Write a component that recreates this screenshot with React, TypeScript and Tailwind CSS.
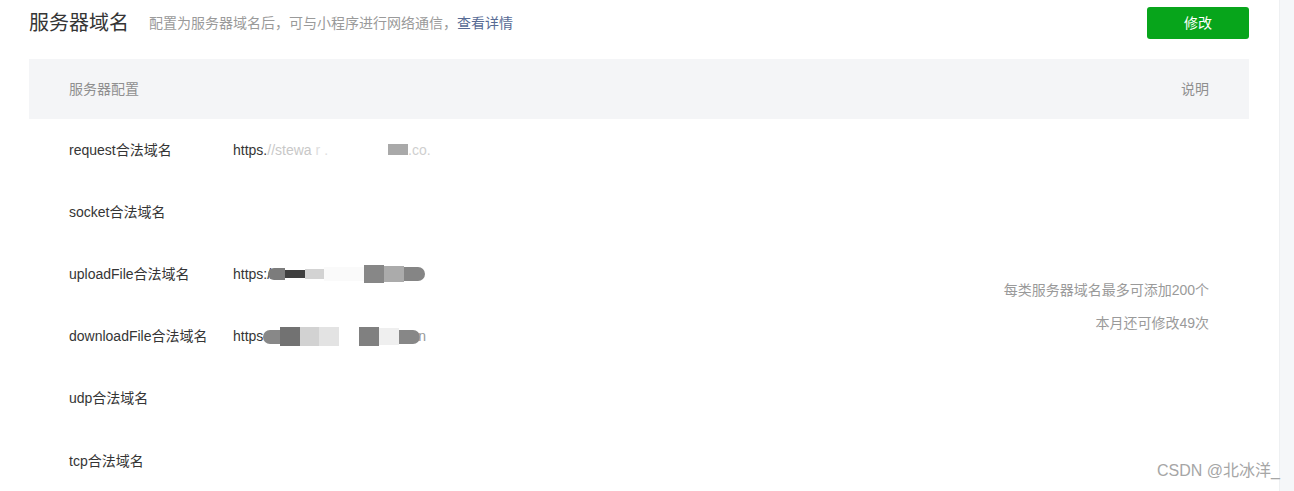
const rows = [
  { name: 'request合法域名', value: 'request' },
  { name: 'socket合法域名', value: '' },
  { name: 'uploadFile合法域名', value: 'upload' },
  { name: 'downloadFile合法域名', value: 'download' },
  { name: 'udp合法域名', value: '' },
  { name: 'tcp合法域名', value: '' },
];

function Masked({ kind }: { kind: string }) {
  if (kind === 'request') {
    return (
      <div className="flex items-center">
        <span>https.</span>
        <span className="text-[#c8c8c8]">//stewa</span>
        <span className="text-[#dedede] ml-[4px]">r .</span>
        <div className="w-[60px]" />
        <div className="w-[20px] h-[11px] bg-[#a9a9a9] -mt-[2px]" />
        <span className="text-[#cfcfcf]">.co.</span>
      </div>
    );
  }
  if (kind === 'upload') {
    return (
      <div className="flex items-center">
        <span>https:/</span>
        <div className="flex items-center -ml-[3px]">
          <div className="w-[17px] h-[12px] bg-[#7c7c7c] rounded-l-full" />
          <div className="w-[20px] h-[8px] bg-[#3f3f3f]" />
          <div className="w-[19px] h-[10px] bg-[#d3d3d3]" />
          <div className="w-[40px] h-[14px] bg-[#fafafa]" />
          <div className="w-[20px] h-[18px] bg-[#878787]" />
          <div className="w-[20px] h-[16px] bg-[#ababab]" />
          <div className="w-[21px] h-[14px] bg-[#858585] rounded-r-full" />
        </div>
      </div>
    );
  }
  return (
    <div className="flex items-center">
      <span>https</span>
      <div className="flex items-center">
        <div className="w-[17px] h-[14px] bg-[#888] rounded-l-full" />
        <div className="w-[20px] h-[19px] bg-[#727272]" />
        <div className="w-[19px] h-[19px] bg-[#d2d2d2]" />
        <div className="w-[20px] h-[19px] bg-[#e3e3e3]" />
        <div className="w-[20px] h-[19px] bg-white" />
        <div className="w-[20px] h-[19px] bg-[#808080]" />
        <div className="w-[20px] h-[17px] bg-[#efefef]" />
        <div className="w-[21px] h-[14px] bg-[#878787] rounded-r-full" />
        <span className="text-[#999] -ml-[2px]">n</span>
      </div>
    </div>
  );
}

export default function App() {
  return (
    <div
      className="relative flex h-[491px] w-full overflow-hidden bg-white"
      style={{ fontFamily: '"Liberation Sans", "Noto Sans CJK SC", sans-serif' }}
    >
      <div className="flex-1 pl-[29px] pr-[30px]">
        {/* title */}
        <div className="flex h-[46px] items-center justify-between mb-[13px]">
          <div className="flex items-center">
            <h2 className="text-[20px] text-[#353535] leading-none">服务器域名</h2>
            <p className="ml-[20px] text-[14px] text-[#9a9a9a]">
              配置为服务器域名后，可与小程序进行网络通信，
              <span className="text-[#576b95]">查看详情</span>
            </p>
          </div>
          <button className="h-[32px] w-[102px] rounded-[3px] bg-[#07a51b] text-[14px] text-white">
            修改
          </button>
        </div>

        {/* table header */}
        <div className="flex h-[60px] items-center justify-between bg-[#f4f5f7] px-[40px] text-[14px] text-[#8f8f8f]">
          <span>服务器配置</span>
          <span>说明</span>
        </div>

        {/* table body */}
        <div className="flex">
          <div className="flex-1 pl-[40px]">
            {rows.map((r) => (
              <div key={r.name} className="flex h-[62.2px] items-center text-[14px] text-[#353535]">
                <div className="w-[164px] shrink-0">{r.name}</div>
                {r.value && <Masked kind={r.value} />}
              </div>
            ))}
          </div>
          <div className="flex flex-col items-end justify-center gap-[12px] pr-[40px] pt-[2px] text-[14px] text-[#9a9a9a]">
            <div>每类服务器域名最多可添加200个</div>
            <div>本月还可修改49次</div>
          </div>
        </div>
      </div>

      <div className="w-[15px] shrink-0 border-l border-[#eef0f2] bg-[#f5f7f9]" />

      <div className="absolute bottom-[8px] right-[14px] text-[16px] text-[#a6a6a6]">CSDN @北冰洋_</div>
    </div>
  );
}
